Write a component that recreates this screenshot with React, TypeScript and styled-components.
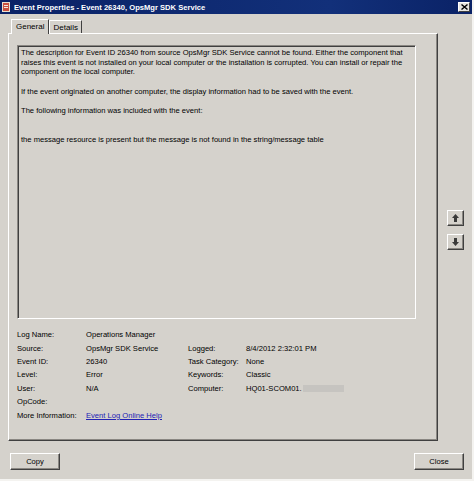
import styled, { createGlobalStyle } from 'styled-components';

const GlobalStyle = createGlobalStyle`
  html, body {
    margin: 0;
    padding: 0;
    background: #d4d0c8;
  }
  body {
    font-family: 'Liberation Sans', Arial, sans-serif;
    font-size: 8px;
    color: #000;
  }
`;

const Window = styled.div`
  width: 474px;
  height: 481px;
  box-sizing: border-box;
  background: #d5d2cc;
  display: flex;
  flex-direction: column;
  border-right: 2px solid #f4f3f0;
  border-bottom: 2px solid #f4f3f0;
`;

const TitleBar = styled.div`
  height: 14px;
  flex-shrink: 0;
  background: linear-gradient(to right, #0a2266, #12307a 70%, #0a2266);
  display: flex;
  align-items: center;
  padding: 0 2px;
  gap: 4px;
  color: #fff;
  font-weight: bold;
  font-size: 7.6px;
`;

const TitleText = styled.span`
  flex-grow: 1;
`;

const CloseBox = styled.div`
  width: 12px;
  height: 10px;
  background: #e8e6e0;
  border: 1px solid #fff;
  border-right-color: #404040;
  border-bottom-color: #404040;
  box-sizing: border-box;
  display: flex;
  align-items: center;
  justify-content: center;
`;

const Body = styled.div`
  flex-grow: 1;
  display: flex;
  flex-direction: column;
  padding: 3px 8px 0 8px;
`;

const TabRow = styled.div`
  display: flex;
  align-items: flex-end;
  height: 16px;
  padding-left: 3px;
`;

const Tab = styled.div<{ $active?: boolean }>`
  height: ${(p) => (p.$active ? 15 : 13)}px;
  padding: 0 ${(p) => (p.$active ? 4 : 3)}px;
  display: flex;
  align-items: center;
  box-sizing: border-box;
  border-top: 1px solid #fff;
  border-left: 1px solid #fff;
  border-right: 1px solid #404040;
  margin-bottom: ${(p) => (p.$active ? -1 : 0)}px;
  background: #d5d2cc;
  position: relative;
  z-index: ${(p) => (p.$active ? 2 : 1)};
  padding-bottom: ${(p) => (p.$active ? 2 : 0)}px;
`;

const MainRow = styled.div`
  display: flex;
  gap: 9px;
  height: 408px;
`;

const Panel = styled.div`
  width: 430px;
  box-sizing: border-box;
  border-top: 1px solid #fff;
  border-left: 1px solid #fff;
  border-right: 1px solid #404040;
  border-bottom: 1px solid #404040;
  box-shadow: inset -1px -1px 0 #8a8782;
  padding: 11px 21px 0 8px;
  display: flex;
  flex-direction: column;
`;

const MessageBox = styled.div`
  height: 274px;
  box-sizing: border-box;
  border-top: 1px solid #8a8782;
  border-left: 1px solid #8a8782;
  border-right: 1px solid #fff;
  border-bottom: 1px solid #fff;
  box-shadow: inset 1px 1px 0 #404040;
  padding: 2px 3px;
  line-height: 9.7px;
  font-size: 7.6px;
`;

const Para = styled.p<{ $gap?: number }>`
  margin: ${(p) => (p.$gap ?? 0) * 9.7}px 0 9.7px 0;
`;

const Details = styled.div`
  display: grid;
  grid-template-columns: 69px 102px 58px 1fr;
  grid-auto-rows: 13.4px;
  align-items: center;
  margin-top: 9px;
  font-size: 7.6px;
`;

const Label = styled.div<{ $col?: number }>`
  grid-column: ${(p) => p.$col ?? 1};
  white-space: nowrap;
`;

const Value = styled.div<{ $col?: number }>`
  grid-column: ${(p) => p.$col ?? 2};
  white-space: nowrap;
  display: flex;
  align-items: center;
`;

const Blur = styled.span`
  display: inline-block;
  width: 41px;
  height: 7px;
  background: #c6c4c0;
  margin-left: 1px;
`;

const Link = styled.a`
  color: #2323b5;
  text-decoration: underline;
  cursor: pointer;
`;

const Side = styled.div`
  display: flex;
  flex-direction: column;
  gap: 8px;
  padding-top: 177px;
`;

const ArrowButton = styled.div`
  width: 17px;
  height: 16px;
  box-sizing: border-box;
  background: #d5d2cc;
  border-top: 1px solid #fff;
  border-left: 1px solid #fff;
  border-right: 1px solid #404040;
  border-bottom: 1px solid #404040;
  box-shadow: inset -1px -1px 0 #8a8782;
  display: flex;
  align-items: center;
  justify-content: center;
`;

const Footer = styled.div`
  display: flex;
  justify-content: space-between;
  padding: 12px 0 0 2px;
`;

const Button = styled.div`
  width: 50px;
  height: 17px;
  box-sizing: border-box;
  border-top: 1px solid #fff;
  border-left: 1px solid #fff;
  border-right: 1px solid #404040;
  border-bottom: 1px solid #404040;
  box-shadow: inset -1px -1px 0 #8a8782;
  display: flex;
  align-items: center;
  justify-content: center;
  font-size: 7.6px;
`;

function Arrow({ down }: { down?: boolean }) {
  return (
    <svg width="7" height="8" viewBox="0 0 7 8">
      <path
        d={down ? 'M2 0h3v4h2L3.5 8 0 4h2z' : 'M3.5 0 7 4H5v4H2V4H0z'}
        fill="#3a3a3a"
      />
    </svg>
  );
}

export default function App() {
  return (
    <>
      <GlobalStyle />
      <Window>
        <TitleBar>
          <svg width="8" height="10" viewBox="0 0 8 10">
            <rect x="0" y="0" width="8" height="10" fill="#e8e0d0" />
            <rect x="1" y="1" width="6" height="8" fill="#c85040" />
            <rect x="2" y="3" width="4" height="1" fill="#f0e8e0" />
            <rect x="2" y="5" width="4" height="1" fill="#f0e8e0" />
          </svg>
          <TitleText>Event Properties - Event 26340, OpsMgr SDK Service</TitleText>
          <CloseBox>
            <svg width="7" height="6" viewBox="0 0 7 6">
              <path d="M0.5 0.5 6.5 5.5M6.5 0.5 0.5 5.5" stroke="#000" strokeWidth="1.4" />
            </svg>
          </CloseBox>
        </TitleBar>
        <Body>
          <TabRow>
            <Tab $active>General</Tab>
            <Tab>Details</Tab>
          </TabRow>
          <MainRow>
            <Panel>
              <MessageBox>
                <Para>
                  The description for Event ID 26340 from source OpsMgr SDK Service cannot be found. Either the component that
                  raises this event is not installed on your local computer or the installation is corrupted. You can install or repair the
                  component on the local computer.
                </Para>
                <Para>
                  If the event originated on another computer, the display information had to be saved with the event.
                </Para>
                <Para>The following information was included with the event:</Para>
                <Para $gap={2}>
                  the message resource is present but the message is not found in the string/message table
                </Para>
              </MessageBox>
              <Details>
                <Label>Log Name:</Label>
                <Value>Operations Manager</Value>
                <Label $col={3} />
                <Label>Source:</Label>
                <Value>OpsMgr SDK Service</Value>
                <Label $col={3}>Logged:</Label>
                <Value $col={4}>8/4/2012 2:32:01 PM</Value>
                <Label>Event ID:</Label>
                <Value>26340</Value>
                <Label $col={3}>Task Category:</Label>
                <Value $col={4}>None</Value>
                <Label>Level:</Label>
                <Value>Error</Value>
                <Label $col={3}>Keywords:</Label>
                <Value $col={4}>Classic</Value>
                <Label>User:</Label>
                <Value>N/A</Value>
                <Label $col={3}>Computer:</Label>
                <Value $col={4}>
                  HQ01-SCOM01.<Blur />
                </Value>
                <Label>OpCode:</Label>
                <Value />
                <Label>More Information:</Label>
                <Value>
                  <Link>Event Log Online Help</Link>
                </Value>
              </Details>
            </Panel>
            <Side>
              <ArrowButton>
                <Arrow />
              </ArrowButton>
              <ArrowButton>
                <Arrow down />
              </ArrowButton>
            </Side>
          </MainRow>
          <Footer>
            <Button>Copy</Button>
            <Button>Close</Button>
          </Footer>
        </Body>
      </Window>
    </>
  );
}
